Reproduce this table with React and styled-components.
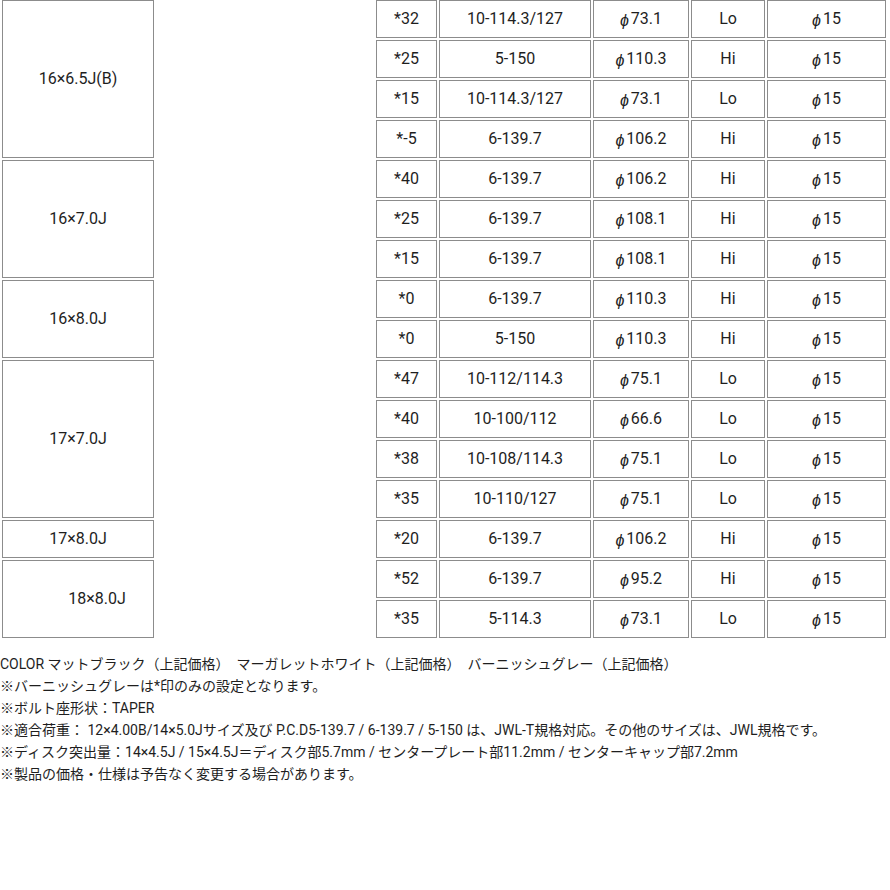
import React from 'react';
import styled, { createGlobalStyle } from 'styled-components';

const GlobalStyle = createGlobalStyle`
  html, body {
    margin: 0;
    padding: 0;
    background: #fff;
  }
  body {
    font-family: Roboto, "Noto Sans CJK JP", sans-serif;
    color: #222;
  }
`;

const SpecGrid = styled.div`
  display: grid;
  grid-template-columns: 152px 218px 61px 152px 96px 74px 119px;
  grid-auto-rows: 38px;
  gap: 2px;
  padding-left: 2px;
  width: max-content;
`;

const Cell = styled.div`
  display: flex;
  align-items: center;
  justify-content: center;
  box-sizing: border-box;
  border: 1px solid #8c8c8c;
  padding-bottom: 1px;
  font-size: 16px;
  color: #1e1e1e;
  white-space: nowrap;
`;

const SizeCell = styled(Cell)`
  grid-column: 1;
  grid-row: span ${p => p.span};
  padding-left: ${p => p.shift || 0}px;
`;

const OffsetCell = styled(Cell)`
  grid-column-start: 3;
`;

const Phi = styled.span`
  font-family: "Noto Sans CJK JP", sans-serif;
  font-style: italic;
  margin-right: 2px;
`;

const Notes = styled.div`
  margin-top: 15px;
  font-size: 14px;
  line-height: 22px;
  color: #1e1e1e;
`;

const Note = styled.p`
  margin: 0;
  white-space: pre;
`;

const groups = [
  {
    size: '16×6.5J(B)',
    rows: [
      ['*32', '10-114.3/127', '73.1', 'Lo'],
      ['*25', '5-150', '110.3', 'Hi'],
      ['*15', '10-114.3/127', '73.1', 'Lo'],
      ['*-5', '6-139.7', '106.2', 'Hi'],
    ],
  },
  {
    size: '16×7.0J',
    rows: [
      ['*40', '6-139.7', '106.2', 'Hi'],
      ['*25', '6-139.7', '108.1', 'Hi'],
      ['*15', '6-139.7', '108.1', 'Hi'],
    ],
  },
  {
    size: '16×8.0J',
    rows: [
      ['*0', '6-139.7', '110.3', 'Hi'],
      ['*0', '5-150', '110.3', 'Hi'],
    ],
  },
  {
    size: '17×7.0J',
    rows: [
      ['*47', '10-112/114.3', '75.1', 'Lo'],
      ['*40', '10-100/112', '66.6', 'Lo'],
      ['*38', '10-108/114.3', '75.1', 'Lo'],
      ['*35', '10-110/127', '75.1', 'Lo'],
    ],
  },
  {
    size: '17×8.0J',
    rows: [['*20', '6-139.7', '106.2', 'Hi']],
  },
  {
    size: '18×8.0J',
    shift: 38,
    rows: [
      ['*52', '6-139.7', '95.2', 'Hi'],
      ['*35', '5-114.3', '73.1', 'Lo'],
    ],
  },
];

const notes = [
  'COLOR マットブラック（上記価格）　マーガレットホワイト（上記価格）　バーニッシュグレー（上記価格）',
  '※バーニッシュグレーは*印のみの設定となります。',
  '※ボルト座形状：TAPER',
  '※適合荷重： 12×4.00B/14×5.0Jサイズ及び P.C.D5-139.7 / 6-139.7 / 5-150 は、JWL-T規格対応。その他のサイズは、JWL規格です。',
  '※ディスク突出量：14×4.5J / 15×4.5J＝ディスク部5.7mm / センタープレート部11.2mm / センターキャップ部7.2mm',
  '※製品の価格・仕様は予告なく変更する場合があります。',
];

export default function App() {
  return (
    <>
      <GlobalStyle />
      <SpecGrid>
        {groups.map(g =>
          g.rows.map((r, i) => (
            <React.Fragment key={g.size + i}>
              {i === 0 && (
                <SizeCell span={g.rows.length} shift={g.shift}>
                  {g.size}
                </SizeCell>
              )}
              <OffsetCell>{r[0]}</OffsetCell>
              <Cell>{r[1]}</Cell>
              <Cell>
                <Phi>ϕ</Phi>
                {r[2]}
              </Cell>
              <Cell>{r[3]}</Cell>
              <Cell>
                <Phi>ϕ</Phi>15
              </Cell>
            </React.Fragment>
          ))
        )}
      </SpecGrid>
      <Notes>
        {notes.map(n => (
          <Note key={n}>{n}</Note>
        ))}
      </Notes>
    </>
  );
}
